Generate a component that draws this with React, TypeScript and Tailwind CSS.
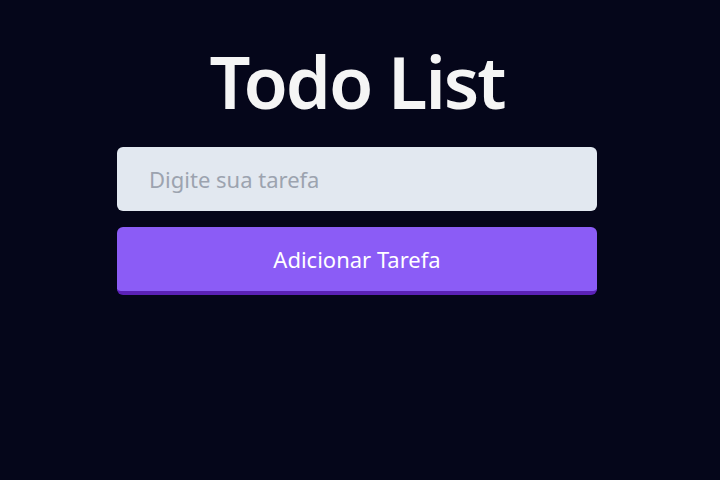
export default function App() {
  return (
    <div
      className="min-h-screen bg-[#05061a] flex flex-col items-center pt-[45px] pr-[6px]"
      style={{ fontFamily: '"Noto Sans", "Open Sans", sans-serif' }}
    >
      <h1 className="text-7xl leading-none font-semibold tracking-[-2px] text-[#f5f5f5] mb-[30px]">Todo List</h1>
      <div className="w-[480px] flex flex-col gap-4">
        <input
          type="text"
          placeholder="Digite sua tarefa"
          className="h-16 w-full rounded-md bg-[#e2e8f0] px-8 text-[22px] text-gray-800 placeholder:text-[#9ca3af] outline-none"
        />
        <button className="h-[68px] w-full rounded-md bg-[#8b5cf6] border-b-4 border-[#5b21b6] text-[22px] text-white">
          Adicionar Tarefa
        </button>
      </div>
    </div>
  );
}
